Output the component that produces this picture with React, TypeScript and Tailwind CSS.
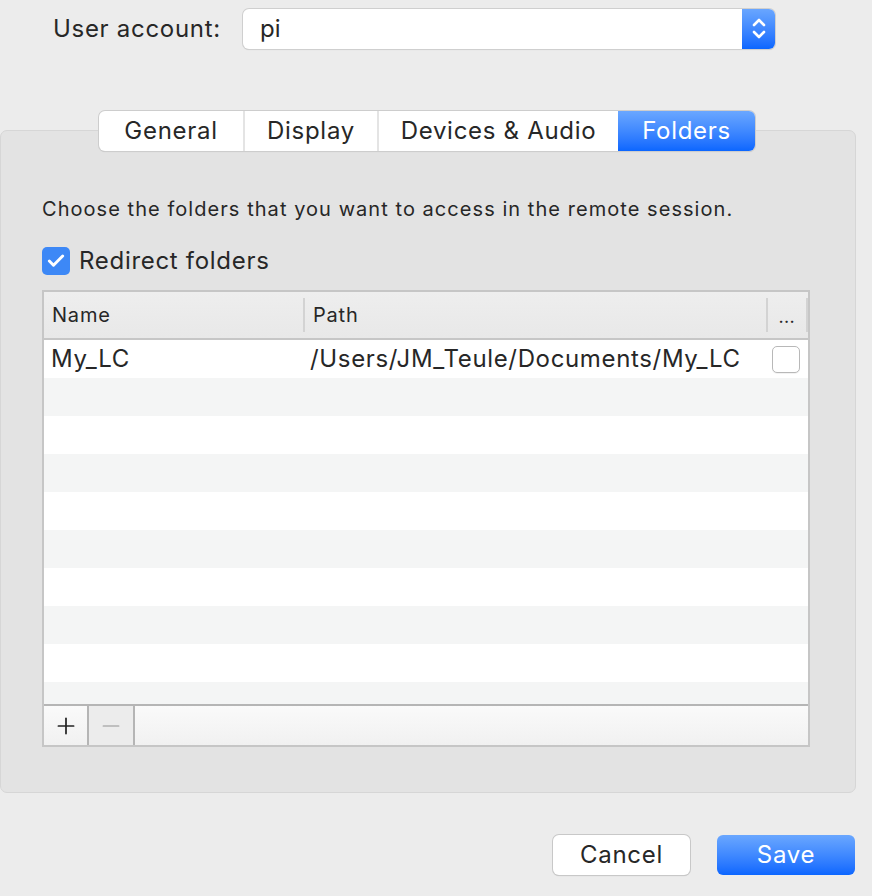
import { Check, Plus, Minus } from 'lucide-react'

const tabs = ['General', 'Display', 'Devices & Audio', 'Folders']

function App() {
  const rows = Array.from({ length: 10 })

  return (
    <div className="w-[872px] h-[896px] overflow-hidden bg-[#ececec] text-[#272727] font-['Inter','Noto_Sans',sans-serif]">
      {/* User account */}
      <div className="flex items-center pt-[9px]">
        <div className="w-[243px] pl-[53px] text-[24px] leading-[40px] tracking-[0.7px]">User account:</div>
        <div className="flex h-[40px] w-[532px] rounded-[6px] bg-white shadow-[0_0_0_1px_#cfcfcf,0_1px_1px_rgba(0,0,0,0.15)]">
          <div className="flex-1 pl-[17px] text-[24px] leading-[40px]">pi</div>
          <div className="flex w-[33px] flex-col items-center justify-center rounded-r-[6px] bg-gradient-to-b from-[#69a6ff] to-[#0a66ff]">
            <svg width="16" height="28" viewBox="0 0 16 28" fill="none" stroke="white" strokeWidth="2.6" strokeLinecap="round" strokeLinejoin="round">
              <path d="M3 10 L8 5 L13 10" />
              <path d="M3 17 L8 22 L13 17" />
            </svg>
          </div>
        </div>
      </div>

      {/* Tabs */}
      <div className="relative z-10 mt-[62px] ml-[99px] flex h-[40px] w-fit rounded-[6px] bg-white text-[24px] tracking-[0.7px] shadow-[0_0_0_1px_#cdcdcd,0_1px_1px_rgba(0,0,0,0.15)]">
        {tabs.map((tab, i) => {
          const active = tab === 'Folders'
          const widths = ['w-[144px]', 'w-[134px]', 'w-[241px]', 'w-[137px]']
          return (
            <div
              key={tab}
              className={`${widths[i]} flex items-center justify-center ${
                active
                  ? 'rounded-r-[6px] bg-gradient-to-b from-[#6aa7ff] to-[#0a66ff] text-white'
                  : 'text-[#272727]'
              } ${i > 0 && i < 3 ? 'border-l-2 border-[#e4e4e4]' : ''}`}
            >
              {tab}
            </div>
          )
        })}
      </div>

      {/* Panel */}
      <div className="-mt-[21px] h-[663px] w-[856px] rounded-[7px] border border-[#d6d6d6] bg-[#e3e3e3] pl-[41px]">
        <p className="pt-[66px] text-[20px] leading-[24px] tracking-[1.05px]">
          Choose the folders that you want to access in the remote session.
        </p>

        <div className="mt-[26px] flex items-center gap-[9px]">
          <div className="flex h-[28px] w-[28px] items-center justify-center rounded-[5px] bg-[#3d88f6]">
            <Check className="h-[20px] w-[20px] text-white" strokeWidth={3.5} />
          </div>
          <span className="text-[24px] leading-[28px] tracking-[0.7px]">Redirect folders</span>
        </div>

        {/* Table */}
        <div className="mt-[15px] w-[768px] border-2 border-[#c6c6c6] bg-white">
          <div className="flex h-[48px] border-b-2 border-[#c6c6c6] bg-gradient-to-b from-[#eeeeee] to-[#e8e8e8] text-[20px] tracking-[0.8px]">
            <div className="flex w-[259px] items-center pl-[8px]">Name</div>
            <div className="my-[6px] w-[2px] bg-[#d3d3d3]" />
            <div className="flex w-[461px] items-center pl-[8px]">Path</div>
            <div className="my-[6px] w-[2px] bg-[#d3d3d3]" />
            <div className="flex w-[38px] items-center justify-center pt-[4px] text-[14px] font-bold">...</div>
            <div className="my-[6px] w-[2px] bg-[#d3d3d3]" />
          </div>

          <div className="h-[364px] overflow-hidden">
            {rows.map((_, i) => (
              <div key={i} className={`flex h-[38px] items-center ${i % 2 === 0 ? 'bg-white' : 'bg-[#f4f5f5]'}`}>
                {i === 0 && (
                  <>
                    <div className="w-[266px] pl-[7px] text-[24px] tracking-[0.7px]">My_LC</div>
                    <div className="w-[462px] text-[24px] tracking-[0.65px]">/Users/JM_Teule/Documents/My_LC</div>
                    <div className="h-[27px] w-[28px] rounded-[5px] border border-[#b8b8b8] bg-white shadow-[0_1px_0_rgba(0,0,0,0.05)]" />
                  </>
                )}
              </div>
            ))}
          </div>

          <div className="flex h-[41px] border-t-2 border-[#b5b5b5] bg-gradient-to-b from-[#fafafa] to-[#f1f1f1]">
            <div className="flex w-[45px] items-center justify-center border-r-2 border-[#b5b5b5]">
              <Plus className="h-[26px] w-[26px] text-[#222]" strokeWidth={1.6} absoluteStrokeWidth />
            </div>
            <div className="flex w-[46px] items-center justify-center border-r-2 border-[#b5b5b5] bg-[#ececec]">
              <Minus className="h-[26px] w-[26px] text-[#b0b0b0]" strokeWidth={1.6} absoluteStrokeWidth />
            </div>
            <div className="flex-1" />
          </div>
        </div>
      </div>

      {/* Buttons */}
      <div className="mt-[42px] flex justify-end gap-[27px] pr-[17px]">
        <button className="h-[40px] w-[137px] rounded-[6px] bg-white text-[24px] tracking-[0.7px] text-[#272727] shadow-[0_0_0_1px_#c8c8c8,0_1px_1px_rgba(0,0,0,0.2)]">
          Cancel
        </button>
        <button className="h-[40px] w-[138px] rounded-[6px] bg-gradient-to-b from-[#6aa7ff] to-[#0a66ff] text-[24px] tracking-[0.7px] text-white">
          Save
        </button>
      </div>
    </div>
  )
}

export default App
